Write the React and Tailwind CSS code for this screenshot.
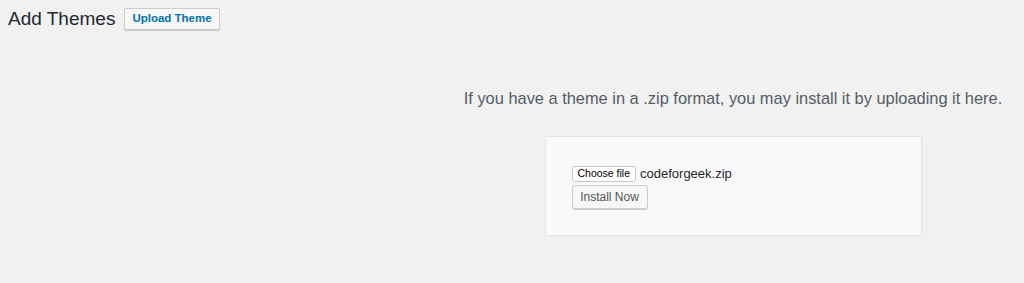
const App = () => {
  return (
    <div className="min-h-[283px] w-full bg-[#f1f1f1] font-['Liberation_Sans',Arial,sans-serif] text-[#23282d]">
      <div className="flex items-center gap-[9px] pl-2 pt-2">
        <h1 className="text-[19px] leading-[22px] font-normal">Add Themes</h1>
        <button className="h-[22px] rounded-[2px] border border-[#cccccc] bg-[#f7f7f7] px-[7px] text-[11.5px] font-semibold text-[#0073aa] shadow-[0_1px_0_#cccccc]">
          Upload Theme
        </button>
      </div>

      <div className="ml-[442px] flex flex-col items-center pt-[59px]">
        <p className="text-[16.4px] leading-[18px] text-[#555d66]">
          If you have a theme in a .zip format, you may install it by uploading it here.
        </p>
        <div className="mt-[29px] flex h-[100px] w-[377px] flex-col items-start border border-[#e5e5e5] bg-[#f9f9f9] pl-[26px] pt-[29px]">
          <div className="flex items-center gap-[4px]">
            <span className="flex h-[16px] items-center rounded-[3px] border border-[#c6c6c6] bg-white px-[5px] text-[10.5px] text-black">
              Choose file
            </span>
            <span className="text-[13px] leading-[16px] text-[#23282d]">codeforgeek.zip</span>
          </div>
          <button className="mt-[3px] h-[24px] w-[76px] rounded-[3px] border border-[#cccccc] bg-[#f7f7f7] text-[12px] text-[#555555] shadow-[0_1px_0_#cccccc]">
            Install Now
          </button>
        </div>
      </div>
    </div>
  );
};

export default App;
